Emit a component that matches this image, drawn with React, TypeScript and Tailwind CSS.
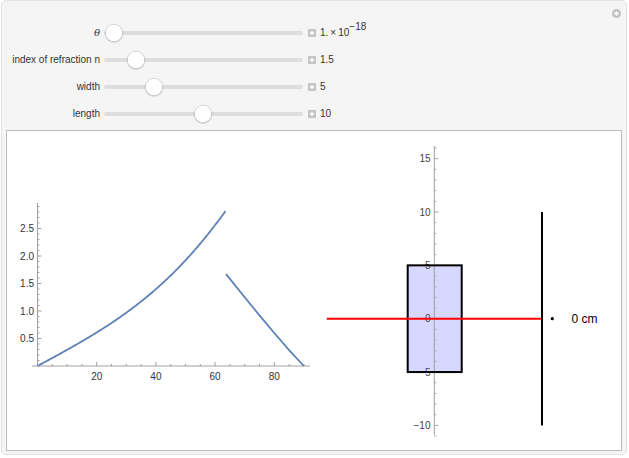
import React from "react";

const font = { fontFamily: '"Liberation Sans", Arial, sans-serif' };

function PlusBox() {
  return (
    <svg width="8" height="8" viewBox="0 0 8 8" className="shrink-0">
      <rect x="0" y="0" width="8" height="8" rx="1" fill="#c4c4c4" />
      <path d="M4 1.8V6.2M1.8 4H6.2" stroke="#fff" strokeWidth="1.3" />
    </svg>
  );
}

function Row({ label, thumb, value }: { label: React.ReactNode; thumb: number; value: React.ReactNode }) {
  return (
    <div className="flex items-center h-[27px]">
      <div className="w-[98px] text-right text-[10px] text-[#333] leading-none">{label}</div>
      <div className="relative ml-[4px] w-[199px] h-[4px] rounded-full bg-[#dedede]">
        <div
          className="absolute top-1/2 w-[17px] h-[17px] -translate-x-1/2 -translate-y-1/2 rounded-full bg-white shadow-[0_0_1px_rgba(0,0,0,0.45),0_1px_2px_rgba(0,0,0,0.18)]"
          style={{ left: thumb }}
        />
      </div>
      <div className="ml-[5px]">
        <PlusBox />
      </div>
      <div className="ml-[4px] text-[10px] text-[#333] leading-none">{value}</div>
    </div>
  );
}

function LeftPlot() {
  const X = (t: number) => 37.5 + t * 2.96;
  const Y = (v: number) => 366 - v * 55;
  const pts1: string[] = [];
  for (let t = 0; t <= 63.7; t += 0.5) {
    const r = (t * Math.PI) / 180;
    const tr = Math.asin(Math.sin(r) / 1.5);
    const d = (5 * Math.sin(r - tr)) / Math.cos(tr);
    pts1.push(`${X(t).toFixed(2)},${Y(d).toFixed(2)}`);
  }
  const p2: [number, number][] = [
    [63.7, 1.67],
    [70, 1.25],
    [75, 0.92],
    [80, 0.6],
    [85, 0.29],
    [90, 0],
  ];
  const pts2 = p2.map(([t, v]) => `${X(t).toFixed(2)},${Y(v).toFixed(2)}`);
  const xt: number[] = [];
  for (let t = 5; t <= 90; t += 5) xt.push(t);
  const yt: number[] = [];
  for (let i = 1; i <= 29; i++) yt.push(i / 10);
  return (
    <g>
      <line x1={32} y1={366} x2={310} y2={366} stroke="#a0a0a0" strokeWidth={1} />
      <line x1={37.5} y1={203} x2={37.5} y2={366} stroke="#a0a0a0" strokeWidth={1} />
      {xt.map((t) => (
        <line key={t} x1={X(t)} x2={X(t)} y1={366} y2={t % 20 === 0 ? 362 : 364} stroke="#a0a0a0" />
      ))}
      {yt.map((v, i) => (
        <line
          key={i}
          x1={37.5}
          x2={(i + 1) % 5 === 0 ? 41.5 : 39.5}
          y1={Y(v)}
          y2={Y(v)}
          stroke="#a0a0a0"
        />
      ))}
      {[20, 40, 60, 80].map((t) => (
        <text key={t} x={X(t)} y={376} fontSize={10} fill="#333" textAnchor="middle" dominantBaseline="central" style={font}>
          {t}
        </text>
      ))}
      {["0.5", "1.0", "1.5", "2.0", "2.5"].map((s) => (
        <text key={s} x={34} y={Y(parseFloat(s))} fontSize={10} fill="#333" textAnchor="end" dominantBaseline="central" style={font}>
          {s}
        </text>
      ))}
      <polyline points={pts1.join(" ")} fill="none" stroke="#5e81b5" strokeWidth={1.8} />
      <polyline points={pts2.join(" ")} fill="none" stroke="#5e81b5" strokeWidth={1.8} />
    </g>
  );
}

function RightPlot() {
  const ax = 434.3;
  const Y = (v: number) => 318.7 - v * 10.67;
  const ticks: number[] = [];
  for (let v = -11; v <= 16; v++) ticks.push(v);
  return (
    <g>
      <rect x={407.7} y={Y(5)} width={54} height={Y(-5) - Y(5)} fill="#d8d8ff" />
      <line x1={ax} y1={146} x2={ax} y2={435} stroke="#a0a0a0" strokeWidth={1} />
      {ticks.map((v) => (
        <line key={v} x1={ax} x2={v % 5 === 0 ? ax + 4 : ax + 2} y1={Y(v)} y2={Y(v)} stroke="#a0a0a0" />
      ))}
      {[15, 10, 5, 0, -5, -10].map((v) => (
        <text key={v} x={430.5} y={Y(v)} fontSize={10} fill="#444" textAnchor="end" dominantBaseline="central" style={font}>
          {v < 0 ? `\u2212${-v}` : v}
        </text>
      ))}
      <rect x={407.7} y={Y(5)} width={54} height={Y(-5) - Y(5)} fill="none" stroke="#000" strokeWidth={2} />
      <line x1={326.7} y1={318.7} x2={542} y2={318.7} stroke="#ff0000" strokeWidth={2} />
      <line x1={542} y1={Y(10)} x2={542} y2={Y(-10)} stroke="#000" strokeWidth={2} />
      <circle cx={552.3} cy={318.7} r={1.6} fill="#000" />
      <text x={571.5} y={318.7} fontSize={12} fill="#000" dominantBaseline="central" style={font}>
        0 cm
      </text>
    </g>
  );
}

export default function App() {
  return (
    <div className="w-[629px] h-[458px] bg-white" style={font}>
      <div className="relative ml-[1px] w-[626px] h-[455px] rounded-[5px] border border-[#e2e2e2] bg-[#f5f5f5]">
        <svg width="9" height="9" viewBox="0 0 9 9" className="absolute right-[5px] top-[8px]">
          <circle cx="4.5" cy="4.5" r="4.5" fill="#c2c2c2" />
          <path d="M4.5 2.2V6.8M2.2 4.5H6.8" stroke="#fff" strokeWidth="1.4" />
        </svg>
        <div className="pt-[18px]">
          <Row
            label={<span className="italic" style={{ fontFamily: '"DejaVu Serif", serif' }}>θ</span>}
            thumb={10.3}
            value={
              <span className="inline-flex items-start">
                <span className="mt-[1px]">1.{"\u2009"}×{"\u2009"}10</span>
                <span className="text-[10px] relative top-[-5px]">−18</span>
              </span>
            }
          />
          <Row label="index of refraction n" thumb={32} value="1.5" />
          <Row label="width" thumb={50} value="5" />
          <Row label="length" thumb={99.3} value="10" />
        </div>
        <div className="ml-[4px] mt-[3px] w-[616px] h-[321px] border border-[#bdbdbd] bg-white">
          <svg width="614" height="319" viewBox="7 131 614 319" className="block">
            <LeftPlot />
            <RightPlot />
          </svg>
        </div>
      </div>
    </div>
  );
}
